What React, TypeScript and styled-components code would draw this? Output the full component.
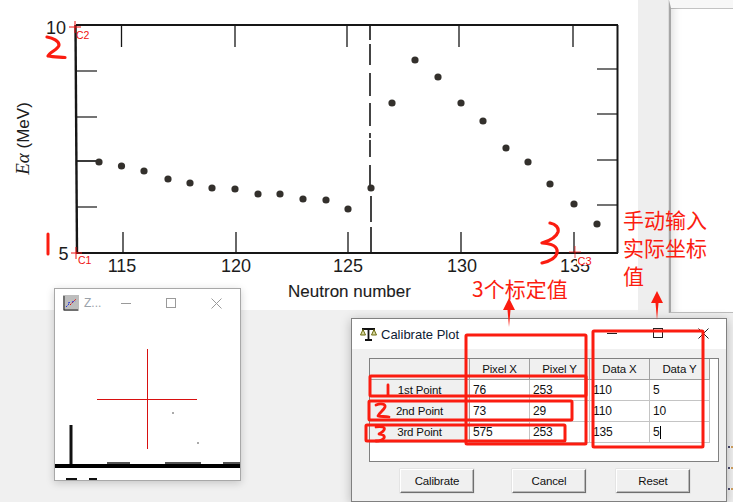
import styled, { createGlobalStyle } from 'styled-components'

const points = [
    [99, 162], [121.5, 166], [144, 171], [168, 179], [190, 183], [212, 188], [235, 189], [258, 194],
    [280, 194], [303, 199], [326, 200], [348, 209], [371, 188], [392, 103], [415, 60], [438, 77],
    [461, 103], [483, 121], [506, 148], [528, 162], [550, 184], [574, 204], [597, 224],
]

const topTicks = [121.5, 235, 347, 459, 573]
const bottomTicks = [123, 236, 348, 461, 574]
const leftTicks = [71, 117, 161, 207]
const rightTicks = [69, 114, 160, 205]
const xLabels = [[122, '115'], [236, '120'], [348, '125'], [462, '130'], [575, '135']] as const

const rows = [
    { label: '1st Point', pixelX: '76', pixelY: '253', dataX: '110', dataY: '5' },
    { label: '2nd Point', pixelX: '73', pixelY: '29', dataX: '110', dataY: '10' },
    { label: '3rd Point', pixelX: '575', pixelY: '253', dataX: '135', dataY: '5' },
]

function ScaleIcon() {
    return (
        <svg width="17" height="14" viewBox="0 0 17 14">
            <path d="M8.5 1v12M5 13h7M2 2h13" stroke="#111" strokeWidth="1.8" fill="none" />
            <path d="M3 2.5L0.5 8h5zM14 2.5L11.5 8h5z" stroke="#6b6b10" strokeWidth="1" fill="#d8d8a0" />
        </svg>
    )
}

function WindowIcons({ color }: { color: string }) {
    return (
        <>
            <svg width="11" height="11" viewBox="0 0 11 11"><path d="M0 5.5H10" stroke={color} /></svg>
            <svg width="11" height="11" viewBox="0 0 11 11"><rect x="0.5" y="0.5" width="9" height="9" stroke={color} fill="none" /></svg>
            <svg width="11" height="11" viewBox="0 0 11 11"><path d="M0.5 0.5L10.5 10.5M10.5 0.5L0.5 10.5" stroke={color} fill="none" /></svg>
        </>
    )
}

function PlotScan() {
    return (
        <PlotSvg viewBox="0 0 670 310">
            <g stroke="#161616" fill="none">
                <path d="M76 25H618" strokeWidth="2" />
                <path d="M76 253H618" strokeWidth="2" />
                <path d="M75.5 25L77 253" strokeWidth="2.4" />
                <path d="M617.5 25V253" strokeWidth="2" />
                <path d="M370 25V40M370 44V65M370 73V96M370 103V126M370 133V138M370 140V157M370 165V190M371 196V222M371 227V253" strokeWidth="1.6" />
                {topTicks.map(x => <path key={x} d={`M${x} 26V47`} strokeWidth="1.3" />)}
                {bottomTicks.map(x => <path key={x} d={`M${x} 232V253`} strokeWidth="1.3" />)}
                {leftTicks.map(y => <path key={y} d={`M77 ${y}H97`} strokeWidth="1.2" />)}
                {rightTicks.map(y => <path key={y} d={`M597 ${y}H617`} strokeWidth="1.2" />)}
                <path d="M77 161H99" strokeWidth="1.2" />
            </g>
            {points.map(([x, y]) => (
                <circle key={x} cx={x} cy={y} r="3.6" fill="#33302c" />
            ))}
            <g fontFamily="'Liberation Sans', sans-serif" fontSize="18" fill="#1c1c1c" textAnchor="middle">
                {xLabels.map(([x, label]) => <text key={x} x={x} y="272">{label}</text>)}
                <text x="56" y="34">10</text>
                <text x="63.5" y="260">5</text>
                <text x="349.5" y="297" fontSize="17" stroke="#1c1c1c" strokeWidth="0.1">Neutron number</text>
                <text transform="translate(29 138.5) rotate(-90)" fontSize="17">
                    <tspan fontFamily="'Liberation Serif', serif" fontStyle="italic" fontSize="19">Eα</tspan> (MeV)
                </text>
            </g>
            <rect x="577" y="254" width="15" height="11" fill="#fff" />
            <g stroke="#f01010" fill="none" strokeWidth="1">
                <path d="M69 27H81M75 21V33M71 253H82M76 247V259" />
                <path d="M569 252H581M575 246V258" strokeWidth="0.7" />
            </g>
            <g fontFamily="'Liberation Sans', sans-serif" fontSize="10.5" fill="#f01010">
                <text x="76" y="39">C2</text>
                <text x="78" y="264">C1</text>
                <text x="577.5" y="264.5" fontSize="11">C3</text>
            </g>
        </PlotSvg>
    )
}

function Markup() {
    return (
        <MarkupSvg viewBox="0 0 733 502">
            <g stroke="#fb1c10" fill="none" strokeLinecap="round" strokeLinejoin="round">
                <path d="M47 37C53 38 59 41 59 45C59 49 50 52 48 56C53 57 59 57 65 57.5" strokeWidth="3.2" />
                <path d="M48 234V254" strokeWidth="3" />
                <path d="M550 223C556 224 559 228 558 232C556 238 549 241 542 243C548 243 556 245 557 250C558 257 551 261 542 263" strokeWidth="3.2" />
                <g strokeWidth="3">
                    <rect x="466" y="335" width="120" height="109" rx="1" />
                    <rect x="593" y="331" width="110" height="116" rx="1" />
                    <rect x="370" y="376" width="216" height="20" rx="1" />
                    <rect x="369" y="401" width="203" height="19" rx="1" />
                    <rect x="366" y="425" width="199" height="16" rx="1" />
                </g>
                <path d="M388 385V395" strokeWidth="2.8" />
                <path d="M376 405C381 403 386 404 385 407C384 410 379 413 378 416C381 417 385 416 389 417" strokeWidth="2.8" />
                <path d="M376 427C381 426 386 427 384 430C382 433 380 433 379 434C383 434 385 436 384 438C382 441 378 441 376 441" strokeWidth="2.8" />
            </g>
            <path d="M509 298L503 310H507.5L509 327L510.5 310H515Z" fill="#fb1c10" />
            <path d="M657 291L651 303H655.5L657 320L658.5 303H663Z" fill="#fb1c10" />
        </MarkupSvg>
    )
}

export default function App() {
    return (
        <>
            <GlobalStyle />
            <Desktop>
                <MainColumn>
                    <PlotScan />
                </MainColumn>
                <SideGutter />
                <SidePanel />

                <ZoomWindow>
                    <ZoomTitle>
                        <ZoomIcon viewBox="0 0 16 16">
                            <rect width="16" height="16" fill="#bdbdbd" />
                            <path d="M1 1V15H15" stroke="#222" fill="none" />
                            <path d="M3 12L6 9" stroke="#2030e0" strokeDasharray="2 1" />
                            <path d="M7 10L13 4" stroke="#e01010" strokeDasharray="2 1" />
                            <path d="M5 8L13 6" stroke="#2030e0" strokeDasharray="2 2" />
                        </ZoomIcon>
                        <ZoomName>Z...</ZoomName>
                        <WindowButtons $gap={34}>
                            <WindowIcons color="#9a9a9a" />
                        </WindowButtons>
                    </ZoomTitle>
                    <ZoomView viewBox="0 0 185 163">
                        <path d="M42 82.5H142M92.5 32V132" stroke="#d81010" strokeWidth="1" shapeRendering="crispEdges" />
                        <path d="M16 108V148" stroke="#111" strokeWidth="3" />
                        <path d="M0 149H185" stroke="#000" strokeWidth="4" />
                        <path d="M52 146H75M110 146H146M168 146H185" stroke="#555" strokeWidth="2" />
                        <path d="M11 162H22M34 162H42" stroke="#111" strokeWidth="2" />
                        <path d="M117 96h2M142 126h2" stroke="#aaa" strokeWidth="2" />
                    </ZoomView>
                </ZoomWindow>

                <Dialog>
                    <DialogTitle>
                        <ScaleIcon />
                        <DialogName>Calibrate Plot</DialogName>
                    </DialogTitle>
                    <DialogBody>
                        <Table>
                            <HeaderCell />
                            <HeaderCell>Pixel X</HeaderCell>
                            <HeaderCell>Pixel Y</HeaderCell>
                            <HeaderCell>Data X</HeaderCell>
                            <HeaderCell>Data Y</HeaderCell>
                            {rows.map((row, i) => (
                                <Row key={row.label}>
                                    <RowHeader>{row.label}</RowHeader>
                                    <DataCell>{row.pixelX}</DataCell>
                                    <DataCell>{row.pixelY}</DataCell>
                                    <DataCell>{row.dataX}</DataCell>
                                    <DataCell>
                                        {row.dataY}
                                        {i === 2 && <Caret />}
                                    </DataCell>
                                </Row>
                            ))}
                        </Table>
                        <ButtonRow>
                            <Button>Calibrate</Button>
                            <CancelButton>Cancel</CancelButton>
                            <Button>Reset</Button>
                        </ButtonRow>
                    </DialogBody>
                </Dialog>

                <DialogControls $gap={34.5}>
                    <WindowIcons color="#222" />
                </DialogControls>

                <EdgeMarks>
                    <EdgeMark />
                    <EdgeMark />
                    <EdgeMark />
                </EdgeMarks>

                <Markup />
                <NoteInput>手动输入<br />实际坐标<br />值</NoteInput>
                <NoteCalibration>3个标定值</NoteCalibration>
            </Desktop>
        </>
    )
}

/* ===========================
   styled-components
   =========================== */

const GlobalStyle = createGlobalStyle`
    html, body {
        margin: 0;
        padding: 0;
        background: #f0f0f0;
    }
    body {
        font-family: 'Liberation Sans', Arial, sans-serif;
    }
`

const Desktop = styled.div`
    position: relative;
    display: flex;
    width: 733px;
    height: 502px;
    overflow: hidden;
    background: #f0f0f0;
`

const MainColumn = styled.div`
    width: 638px;
    height: 310px;
    flex: none;
    background: #fff;
`

const PlotSvg = styled.svg`
    display: block;
    width: 670px;
    height: 310px;
`

const SideGutter = styled.div`
    width: 31px;
    height: 313px;
    flex: none;
    background: #eeeeee;
    border-right: 1px solid #dcdcdc;
    box-sizing: border-box;
    z-index: 1;
`

const SidePanel = styled.div`
    flex: 1;
    height: 313px;
    box-sizing: border-box;
    background: #fff;
    border-left: 2px solid #a6a6a6;
    border-top: 8px solid #f7f7f7;
    border-bottom: 1px solid #bdbdbd;
    box-shadow: inset 10px 0 10px -8px rgba(0, 0, 0, 0.14), inset 0 1px 0 #c4c4c4;
    z-index: 1;
`

const ZoomWindow = styled.div`
    position: absolute;
    left: 54px;
    top: 288px;
    width: 185px;
    height: 191px;
    display: flex;
    flex-direction: column;
    background: #fff;
    border: 1px solid #a8a8a8;
    box-shadow: 0 2px 8px rgba(0, 0, 0, 0.18);
    overflow: hidden;
    z-index: 2;
`

const ZoomTitle = styled.div`
    height: 28px;
    display: flex;
    align-items: center;
    padding: 0 18px 0 8px;
    gap: 5px;
    flex: none;
`

const ZoomIcon = styled.svg`
    width: 16px;
    height: 16px;
`

const ZoomName = styled.span`
    font-size: 12px;
    color: #9aa2aa;
`

const WindowButtons = styled.div<{ $gap: number }>`
    margin-left: auto;
    display: flex;
    gap: ${p => p.$gap}px;
`

const ZoomView = styled.svg`
    flex: 1;
    width: 100%;
    min-height: 0;
    display: block;
`

const Dialog = styled.div`
    position: absolute;
    left: 351px;
    top: 318px;
    width: 374px;
    height: 182px;
    display: flex;
    flex-direction: column;
    background: #f0f0f0;
    border: 1px solid #808080;
    box-shadow: 0 2px 10px rgba(0, 0, 0, 0.25);
    z-index: 2;
`

const DialogTitle = styled.div`
    height: 30px;
    flex: none;
    display: flex;
    align-items: center;
    gap: 4px;
    padding: 0 8px;
    background: #fff;
`

const DialogName = styled.span`
    font-size: 13px;
    color: #0d1b33;
`

const DialogBody = styled.div`
    flex: 1;
    display: flex;
    flex-direction: column;
    padding: 9px 7px 0 17px;
`

const Table = styled.div`
    height: 104px;
    box-sizing: border-box;
    display: grid;
    grid-template-columns: 100px repeat(4, 60px);
    grid-auto-rows: 21px;
    background: #fff;
    border: 1px solid #808080;
    font-size: 11.5px;
    letter-spacing: -0.15px;
    color: #111;
`

const HeaderCell = styled.div`
    box-sizing: border-box;
    display: flex;
    align-items: center;
    justify-content: center;
    background: #f0f0f0;
    border-right: 1px solid #a0a0a0;
    border-bottom: 1px solid #a0a0a0;
`

const Row = styled.div`
    display: contents;
`

const RowHeader = styled.div`
    box-sizing: border-box;
    display: flex;
    align-items: center;
    justify-content: center;
    background: #f0f0f0;
    border-right: 1px solid #a0a0a0;
    border-bottom: 1px solid #e0e0e0;
`

const DataCell = styled.div`
    box-sizing: border-box;
    display: flex;
    align-items: center;
    padding-left: 3px;
    border-right: 1px solid #c4c4c4;
    border-bottom: 1px solid #c4c4c4;
    font-size: 12px;
`

const Caret = styled.span`
    width: 1px;
    height: 13px;
    background: #000;
`

const ButtonRow = styled.div`
    display: flex;
    margin-top: 7px;
    padding-left: 31px;
`

const Button = styled.button`
    width: 74px;
    height: 24px;
    padding: 0;
    font-family: inherit;
    font-size: 11.5px;
    letter-spacing: -0.15px;
    color: #111;
    background: #f0f0f0;
    border: 1px solid;
    border-color: #fff #6f6f6f #6f6f6f #fff;
    box-shadow: inset -1px -1px 0 #b8b8b8, 0 0 0 0.5px #d8d8d8;
`

const CancelButton = styled(Button)`
    margin: 0 30px 0 38px;
`

const DialogControls = styled(WindowButtons)`
    position: absolute;
    left: 607px;
    top: 328px;
    z-index: 3;
`

const EdgeMarks = styled.div`
    position: absolute;
    left: 728px;
    top: 446px;
    display: flex;
    flex-direction: column;
    gap: 19px;
`

const EdgeMark = styled.div`
    width: 5px;
    height: 2px;
    background: linear-gradient(90deg, #4a4a70 0 40%, #fff 40% 60%, #d0a060 60%);
`

const MarkupSvg = styled.svg`
    position: absolute;
    left: 0;
    top: 0;
    width: 733px;
    height: 502px;
    z-index: 4;
    pointer-events: none;
`

const NoteInput = styled.div`
    position: absolute;
    left: 623px;
    top: 205px;
    font-family: 'Noto Sans CJK SC', sans-serif;
    font-size: 21px;
    line-height: 28px;
    color: #fb1c10;
    z-index: 4;
`

const NoteCalibration = styled.div`
    position: absolute;
    left: 472px;
    top: 274px;
    font-family: 'Noto Sans CJK SC', sans-serif;
    font-size: 21px;
    line-height: 28px;
    color: #fb1c10;
    z-index: 4;
`
